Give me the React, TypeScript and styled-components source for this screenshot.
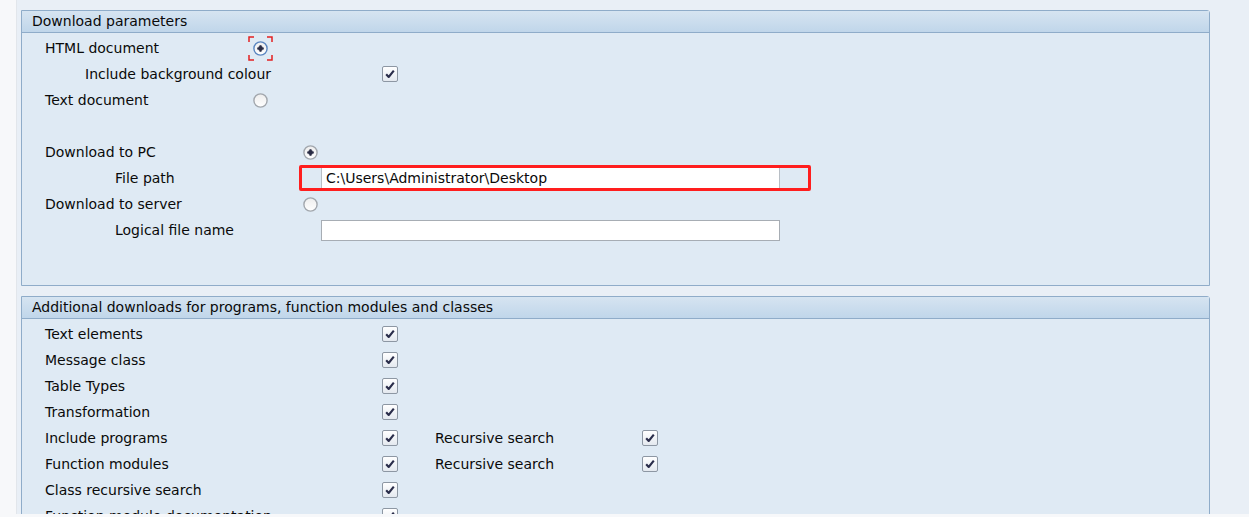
import React from "react";
import styled, { createGlobalStyle } from "styled-components";

const GlobalStyle = createGlobalStyle`
  html, body { margin: 0; padding: 0; }
  body {
    width: 1249px;
    height: 517px;
    overflow: hidden;
    background: #f7f8fa;
    font-family: "DejaVu Sans", Tahoma, sans-serif;
  }
`;

const Screen = styled.div`
  display: flex;
  flex-direction: column;
  width: 1249px;
  height: 517px;
  overflow: hidden;
`;

const Main = styled.div`
  display: flex;
  height: 514px;
  overflow: hidden;
`;

const BottomStrip = styled.div`
  height: 3px;
  background: #f7f8fa;
`;

const SideStrip = styled.div`
  width: 16px;
  flex: none;
  background: #f7f8fa;
  border-right: 1px solid #e2e6eb;
`;

const Content = styled.div`
  flex: 1;
  background: #e9eff6;
  padding: 10px 0 0 4px;
  display: flex;
  flex-direction: column;
  gap: 10px;
`;

const Panel = styled.section`
  width: 1189px;
  box-sizing: border-box;
  border: 1px solid #8facc9;
  border-top-right-radius: 3px;
  background: #dfeaf4;
  flex: none;
`;

const PanelHeader = styled.div`
  height: 21px;
  line-height: 21px;
  padding-left: 10px;
  background: linear-gradient(#d6e4f1, #c0d6ea);
  border-bottom: 1px solid #8facc9;
  font-size: 14px;
  color: #0a0a0a;
`;

const PanelBody = styled.div<{ $bottom: number }>`
  padding: 2px 0 ${(p) => p.$bottom}px 0;
`;

const Row = styled.div`
  display: flex;
  align-items: center;
  height: 26px;
  font-size: 14px;
  color: #0a0a0a;
`;

const Label = styled.span<{ $indent: number; $to: number }>`
  box-sizing: border-box;
  flex: none;
  width: ${(p) => p.$to}px;
  padding-left: ${(p) => p.$indent}px;
  white-space: nowrap;
`;

const Spacer = styled.span<{ $w: number }>`
  flex: none;
  width: ${(p) => p.$w}px;
`;

const ControlWrap = styled.span`
  position: relative;
  display: inline-flex;
  flex: none;
`;

const FocusCorners = styled.svg`
  position: absolute;
  left: -5px;
  top: -5px;
  width: 25px;
  height: 25px;
  pointer-events: none;
`;

const CheckBox = styled.span`
  box-sizing: border-box;
  width: 16px;
  height: 16px;
  border: 1px solid #8d97a3;
  border-radius: 2px;
  background: linear-gradient(#ffffff, #e4e9ef);
  display: inline-flex;
  align-items: center;
  justify-content: center;
  flex: none;
`;

const FieldFrame = styled.div`
  box-sizing: border-box;
  display: flex;
  align-items: stretch;
  width: 512px;
  height: 26px;
  margin-left: -1px;
  border: 3px solid #ff1e1e;
  border-radius: 2px;
  background: #dfeaf4;
`;

const FrameSide = styled.span<{ $w: number }>`
  flex: none;
  width: ${(p) => p.$w}px;
`;

const Input = styled.div<{ $w: number }>`
  box-sizing: border-box;
  width: ${(p) => p.$w}px;
  height: 21px;
  border: 1px solid #a7adb4;
  background: #ffffff;
  font-size: 14px;
  line-height: 19px;
  padding-left: 4px;
  color: #0a0a0a;
  white-space: nowrap;
  flex: none;
`;

const FramedInput = styled(Input)`
  height: 20px;
  border-color: #b8bec5;
  border-top: none;
  border-bottom: none;
  line-height: 20px;
`;

function Radio({ on, focus }: { on?: boolean; focus?: boolean }) {
  return (
    <ControlWrap>
      <svg width="15" height="15" viewBox="0 0 15 15">
        <defs>
          <linearGradient id="rg" x1="0" y1="0" x2="0" y2="1">
            <stop offset="0" stopColor="#ededed" />
            <stop offset="1" stopColor="#ffffff" />
          </linearGradient>
        </defs>
        <circle
          cx="7.5"
          cy="7.5"
          r="6.6"
          fill="url(#rg)"
          stroke={focus ? "#5a86c0" : "#a2a7ad"}
          strokeWidth="1.4"
        />
        {on && (
          <>
            <circle cx="7.5" cy="7.5" r="2.4" fill="#2b2d45" />
            <rect x="6.5" y="4.2" width="2" height="6.6" fill="#2b2d45" />
            <rect x="4.2" y="6.5" width="6.6" height="2" fill="#2b2d45" />
          </>
        )}
      </svg>
      {focus && (
        <FocusCorners viewBox="0 0 25 25">
          <path
            d="M1 6V1H6 M19 1H24V6 M24 19V24H19 M6 24H1V19"
            fill="none"
            stroke="#e32020"
            strokeWidth="1.5"
          />
        </FocusCorners>
      )}
    </ControlWrap>
  );
}

function Check() {
  return (
    <CheckBox>
      <svg width="12" height="12" viewBox="0 0 12 12">
        <path
          d="M2.2 6.2L4.7 9L9.8 2.6"
          fill="none"
          stroke="#2a2d4a"
          strokeWidth="2.1"
          strokeLinejoin="round"
        />
      </svg>
    </CheckBox>
  );
}

const CB = 360; // checkbox column start (x=382)
const R1 = 231; // radio group 1 (x=253)
const R2 = 281; // radio group 2 (x=303)

export default function App() {
  return (
    <>
      <GlobalStyle />
      <Screen>
        <Main>
          <SideStrip />
          <Content>
            <Panel>
              <PanelHeader>Download parameters</PanelHeader>
              <PanelBody $bottom={42}>
                <Row>
                  <Label $indent={23} $to={R1}>HTML document</Label>
                  <Radio on focus />
                </Row>
                <Row>
                  <Label $indent={63} $to={CB}>Include background colour</Label>
                  <Check />
                </Row>
                <Row>
                  <Label $indent={23} $to={R1}>Text document</Label>
                  <Radio />
                </Row>
                <Row />
                <Row>
                  <Label $indent={23} $to={R2}>Download to PC</Label>
                  <Radio on />
                </Row>
                <Row>
                  <Label $indent={93} $to={278}>File path</Label>
                  <FieldFrame>
                    <FrameSide $w={19} />
                    <FramedInput $w={459}>C:\Users\Administrator\Desktop</FramedInput>
                  </FieldFrame>
                </Row>
                <Row>
                  <Label $indent={23} $to={R2}>Download to server</Label>
                  <Radio />
                </Row>
                <Row>
                  <Label $indent={93} $to={299}>Logical file name</Label>
                  <Input $w={459} />
                </Row>
              </PanelBody>
            </Panel>
            <Panel>
              <PanelHeader>Additional downloads for programs, function modules and classes</PanelHeader>
              <PanelBody $bottom={20}>
                <Row>
                  <Label $indent={23} $to={CB}>Text elements</Label>
                  <Check />
                </Row>
                <Row>
                  <Label $indent={23} $to={CB}>Message class</Label>
                  <Check />
                </Row>
                <Row>
                  <Label $indent={23} $to={CB}>Table Types</Label>
                  <Check />
                </Row>
                <Row>
                  <Label $indent={23} $to={CB}>Transformation</Label>
                  <Check />
                </Row>
                <Row>
                  <Label $indent={23} $to={CB}>Include programs</Label>
                  <Check />
                  <Spacer $w={37} />
                  <Label $indent={0} $to={207}>Recursive search</Label>
                  <Check />
                </Row>
                <Row>
                  <Label $indent={23} $to={CB}>Function modules</Label>
                  <Check />
                  <Spacer $w={37} />
                  <Label $indent={0} $to={207}>Recursive search</Label>
                  <Check />
                </Row>
                <Row>
                  <Label $indent={23} $to={CB}>Class recursive search</Label>
                  <Check />
                </Row>
                <Row>
                  <Label $indent={23} $to={CB}>Function module documentation</Label>
                  <Check />
                </Row>
              </PanelBody>
            </Panel>
          </Content>
        </Main>
        <BottomStrip />
      </Screen>
    </>
  );
}
